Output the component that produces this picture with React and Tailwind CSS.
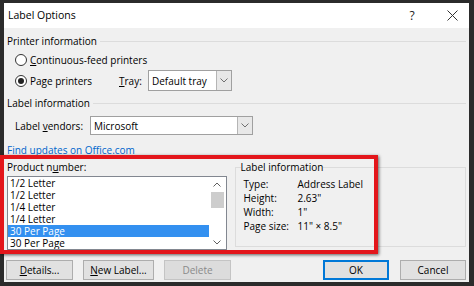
import React from "react";

const Chevron = ({ up = false, className = "" }) => (
  <svg width="8" height="5" viewBox="0 0 8 5" className={className}>
    <polyline
      points={up ? "0.5,4.5 4,1 7.5,4.5" : "0.5,0.5 4,4 7.5,0.5"}
      fill="none"
      stroke="currentColor"
      strokeWidth="1"
    />
  </svg>
);

const Radio = ({ checked }) => (
  <span className="w-[12px] h-[12px] rounded-full border border-[#333] bg-white flex items-center justify-center">
    {checked && <span className="w-[6px] h-[6px] rounded-full bg-[#222]" />}
  </span>
);

const GroupHeader = ({ children }) => (
  <div className="h-[14px] flex items-center">
    <span>{children}</span>
    <span className="flex-1 h-px bg-[#dcdcdc] ml-[3px]" />
  </div>
);

const Combo = ({ value, className = "" }) => (
  <div className={`flex bg-white border border-[#a0a0a0] ${className}`}>
    <span className="flex-1 flex items-center pl-[3px]">{value}</span>
    <span className="w-[15px] border-l border-[#b5b5b5] bg-[#e8e8e8] flex items-center justify-center text-[#707070]">
      <Chevron />
    </span>
  </div>
);

const Button = ({ children, className = "" }) => (
  <button className={`h-[20px] border flex items-center justify-center ${className}`}>
    {children}
  </button>
);

const products = [
  "1/2 Letter",
  "1/2 Letter",
  "1/4 Letter",
  "1/4 Letter",
  "30 Per Page",
  "30 Per Page",
];

const labelInfo = [
  ["Type:", "Address Label"],
  ["Height:", '2.63"'],
  ["Width:", '1"'],
  ["Page size:", '11" × 8.5"'],
];

export default function App() {
  return (
    <div className="relative w-[474px] h-[286px] bg-[#2b2b2b] pt-[3px] pl-[4px] pr-[5px] pb-[4px] font-['Open_Sans','Noto_Sans',sans-serif] text-[10px] leading-none text-black">
      <div className="h-full bg-[#f0f0f0] flex flex-col">
        {/* title bar */}
        <div className="h-[25px] bg-white flex items-center pl-[4px]">
          <span className="text-[10.5px]">Label Options</span>
          <span className="ml-auto w-[20px] text-center text-[12px] text-[#222]">?</span>
          <span className="ml-[20px] mr-[7px] w-[20px] flex justify-center text-[#333]">
            <svg width="11" height="11" viewBox="0 0 11 11">
              <path d="M0.5 0.5 L10.5 10.5 M10.5 0.5 L0.5 10.5" stroke="currentColor" strokeWidth="1" />
            </svg>
          </span>
        </div>

        {/* body */}
        <div className="flex-1 flex flex-col pl-[3px] pr-[3px]">
          <div className="mt-[6px]">
            <GroupHeader>Printer information</GroupHeader>
          </div>

          <div className="mt-[4px] h-[16px] flex items-center ml-[8px]">
            <Radio />
            <span className="ml-[3px]">
              <u>C</u>ontinuous-feed printers
            </span>
          </div>

          <div className="mt-[2px] h-[21px] flex items-center ml-[8px]">
            <div className="w-[104px] flex items-center">
              <Radio checked />
              <span className="ml-[3px]">
                Pa<u>g</u>e printers
              </span>
            </div>
            <span className="w-[29px]">
              <u>T</u>ray:
            </span>
            <Combo value="Default tray" className="w-[84px] h-[21px]" />
          </div>

          <div className="mt-[5px]">
            <GroupHeader>Label information</GroupHeader>
          </div>

          <div className="mt-[6px] h-[19px] flex items-center ml-[8px]">
            <span className="w-[75px]">
              Label <u>v</u>endors:
            </span>
            <Combo value="Microsoft" className="w-[163px] h-[19px]" />
          </div>

          <div className="mt-[8px] h-[14px] flex items-center text-[#0066cc]">
            Find updates on Office.com
          </div>

          <div className="mt-[3px] flex">
            {/* product list */}
            <div className="w-[220px] flex flex-col">
              <div className="h-[14px] flex items-center">
                Product n<u>u</u>mber:
              </div>
              <div className="mt-[2px] h-[74px] border border-[#828790] bg-white flex">
                <div className="flex-1 flex flex-col">
                  {products.map((p, i) => (
                    <div
                      key={i}
                      className={`h-[12px] leading-[12px] overflow-hidden pl-[2px] ${
                        i === 4 ? "bg-[#3390f0] text-white" : ""
                      }`}
                    >
                      {p}
                    </div>
                  ))}
                </div>
                <div className="w-[17px] flex flex-col items-center text-[#606060]">
                  <div className="h-[15px] flex items-center justify-center">
                    <Chevron up />
                  </div>
                  <div className="w-[13px] h-[16px] bg-[#cdcdcd]" />
                  <div className="mt-auto h-[13px] flex items-center justify-center">
                    <Chevron />
                  </div>
                </div>
              </div>
            </div>

            {/* label information box */}
            <fieldset className="ml-[8px] w-[232px] h-[87px] border border-[#dcdcdc] px-[5px]">
              <legend className="h-[14px] leading-[14px]">Label information</legend>
              <div className="mt-[3px] flex flex-col pl-[3px]">
                {labelInfo.map(([k, v]) => (
                  <div key={k} className="h-[14px] flex items-center">
                    <span className="w-[54px]">{k}</span>
                    <span>{v}</span>
                  </div>
                ))}
              </div>
            </fieldset>
          </div>

          {/* buttons */}
          <div className="mt-[10px] flex -ml-px">
            <Button className="w-[67px] bg-[#e1e1e1] border-[#adadad]">
              <u>D</u>etails...
            </Button>
            <Button className="ml-[10px] w-[71px] bg-[#e1e1e1] border-[#adadad]">
              <u>N</u>ew Label...
            </Button>
            <Button className="ml-[10px] w-[67px] bg-[#dcdcdc] border-[#c4c4c4] text-[#8a8a8a]">
              Delete
            </Button>
            <Button className="ml-auto w-[66px] bg-[#e1e1e1] border-[#0078d7] shadow-[inset_0_0_0_1px_#0078d7]">
              OK
            </Button>
            <Button className="ml-[11px] w-[66px] bg-[#e1e1e1] border-[#adadad]">
              Cancel
            </Button>
          </div>
        </div>
      </div>

      {/* red annotation box */}
      <div className="absolute left-0 top-[155px] w-[378px] h-[99px] border-[4px] border-[#e3161b] shadow-[1px_1px_3px_rgba(0,0,0,0.6)]" />
    </div>
  );
}
